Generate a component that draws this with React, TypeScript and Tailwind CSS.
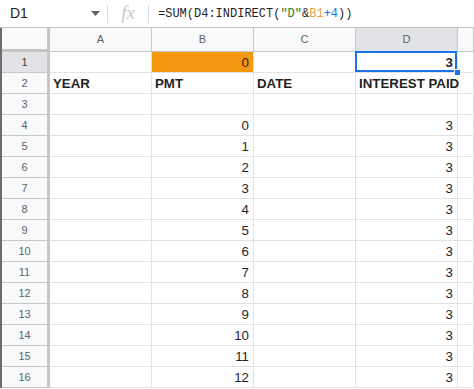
import { FC } from 'react';

const cols = ['A', 'B', 'C', 'D', ''];

type Row = { n: number; a?: string; b?: string; c?: string; d?: string; bold?: boolean };

const rows: Row[] = [
  { n: 1, b: '0', d: '3' },
  { n: 2, a: 'YEAR', b: 'PMT', c: 'DATE', d: 'INTEREST PAID', bold: true },
  { n: 3 },
  ...Array.from({ length: 13 }, (_, i) => ({ n: i + 4, b: String(i), d: '3' })),
];

const FormulaBar: FC = () => (
  <div className="flex h-[28px] shrink-0 items-center border-b border-[#c7c7c7] bg-white">
    <div className="flex w-[107px] items-center justify-between pl-[10px] pr-[7px]">
      <span className="text-[14px] text-[#1f1f1f]">D1</span>
      <svg width="9" height="5" viewBox="0 0 9 5">
        <path d="M0 0h9L4.5 5z" fill="#5f6368" />
      </svg>
    </div>
    <div className="h-[18px] w-px bg-[#dadce0]" />
    <div className="flex w-[40px] justify-center">
      <span className="font-['Liberation_Serif',serif] text-[19px] italic text-[#c4c7c5]">fx</span>
    </div>
    <div className="h-[18px] w-px bg-[#dadce0]" />
    <div className="pl-[9px] font-['Liberation_Mono',monospace] text-[12px] text-[#1f1f1f]">
      =SUM(D4:INDIRECT(<span className="text-[#188038]">"D"</span>&amp;
      <span className="text-[#e8a33c]">B1</span>
      <span className="text-[#1a73e8]">+4</span>))
    </div>
  </div>
);

const App: FC = () => {
  return (
    <div className="relative flex h-[389px] w-[474px] flex-col overflow-hidden bg-white font-['Liberation_Sans',Arial,sans-serif]">
      <FormulaBar />
      <div className="grid grid-cols-[48px_102px_102px_102px_102px_1fr] grid-rows-[24px] auto-rows-[21px] border-l-2 border-[#6d6d6d]">
        <div className="border-b-[3px] border-r-[3px] border-[#c4c4c4] bg-[#f8f9fa]" />
        {cols.map((c, i) => (
          <div
            key={i}
            className={`flex items-center justify-center border-b border-r border-[#c4c7c5] text-[11px] text-[#5f6368] ${
              c === 'D' ? 'bg-[#e1e3e6] text-[#3c4043]' : 'bg-[#f8f9fa]'
            }`}
          >
            {c}
          </div>
        ))}
        {rows.map((r) => (
          <Line key={r.n} row={r} />
        ))}
      </div>
    </div>
  );
};

const Line: FC<{ row: Row }> = ({ row }) => {
  const cell = 'flex items-center border-b border-r border-[#e2e2e3] pt-[1px] text-[13.3px] text-[#1f1f1f] whitespace-nowrap';
  const text = row.bold ? 'font-bold justify-start pl-[3px]' : 'justify-end pr-[4px]';
  return (
    <>
      <div
        className={`flex items-center justify-center border-b border-r-[3px] border-[#c4c7c5] text-[11px] ${
          row.n === 1 ? 'bg-[#e1e3e6] text-[#3c4043]' : 'bg-[#f8f9fa] text-[#5f6368]'
        }`}
      >
        {row.n}
      </div>
      <div className={`${cell} ${text}`}>{row.a}</div>
      <div className={`${cell} ${text} ${row.n === 1 ? 'bg-[#f5960f]' : ''}`}>{row.b}</div>
      <div className={`${cell} ${text}`}>{row.c}</div>
      {row.n === 1 ? (
        <div className={`${cell} ${text} relative overflow-visible font-bold`}>
          {row.d}
          <div className="absolute -left-px -top-px bottom-0 right-0 border-2 border-[#1a73e8]" />
          <div className="absolute -bottom-[4px] -right-[4px] h-[7px] w-[7px] border border-white bg-[#1a73e8]" />
        </div>
      ) : (
        <div className={`${cell} ${text} overflow-visible`}>{row.d}</div>
      )}
      <div className={cell} />
    </>
  );
};

export default App;
